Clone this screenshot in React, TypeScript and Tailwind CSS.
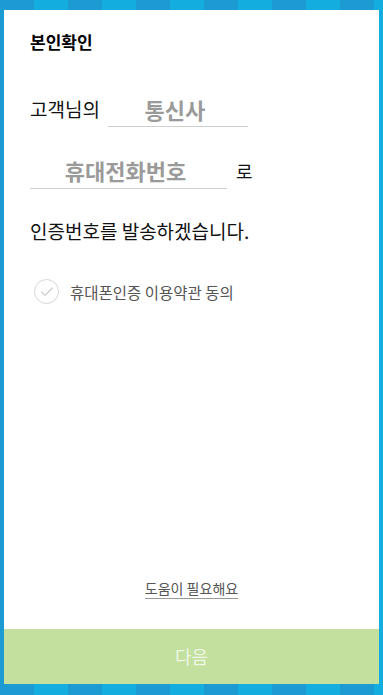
import { Check } from 'lucide-react';

export default function App() {
  return (
    <div className="h-[695px] w-[383px] bg-[repeating-linear-gradient(90deg,#1b9bd2_0px,#1b9bd2_34px,#13ade0_34px,#13ade0_68px)] px-[4px] pt-[10px] pb-[11px] font-['Noto_Sans_CJK_KR','Noto_Sans',sans-serif]">
      <div className="flex h-full flex-col bg-white">
        <div className="flex-1 px-[26px]">
          <h1 className="mt-[20px] text-[17px] font-bold leading-[24px] text-black">본인확인</h1>

          <div className="mt-[40px] flex items-end">
            <span className="mb-[6px] text-[19px] leading-[24px] text-[#111]">고객님의</span>
            <div className="ml-[8px] flex w-[140px] justify-center border-b border-[#cfcfcf] pb-[2px] pr-[6px]">
              <span className="text-[22px] font-bold leading-[30px] text-[#9a9a9a]">통신사</span>
            </div>
          </div>

          <div className="mt-[28px] flex items-end">
            <div className="flex w-[197px] justify-center border-b border-[#cfcfcf] pb-[3px] pr-[6px]">
              <span className="text-[22px] font-bold leading-[30px] text-[#9a9a9a]">휴대전화번호</span>
            </div>
            <span className="mb-[6px] ml-[9px] text-[18px] leading-[24px] text-[#111]">로</span>
          </div>

          <p className="mt-[28px] text-[19px] leading-[28px] text-[#111]">인증번호를 발송하겠습니다.</p>

          <label className="mt-[34px] flex items-center">
            <span className="ml-[4px] flex h-[25px] w-[25px] items-center justify-center rounded-full border border-[#d6d6d6]">
              <Check className="h-[16px] w-[16px] text-[#c8c8c8]" strokeWidth={1.6} />
            </span>
            <span className="ml-[11px] text-[15.5px] leading-[22px] text-[#555]">휴대폰인증 이용약관 동의</span>
          </label>
        </div>

        <div className="flex justify-center pb-[30px]">
          <span className="border-b border-[#999] text-[14px] leading-[20px] text-[#555]">도움이 필요해요</span>
        </div>

        <button className="h-[55px] w-full bg-[#c3e09e] text-[18px] text-[#eef6e4]">다음</button>
      </div>
    </div>
  );
}
